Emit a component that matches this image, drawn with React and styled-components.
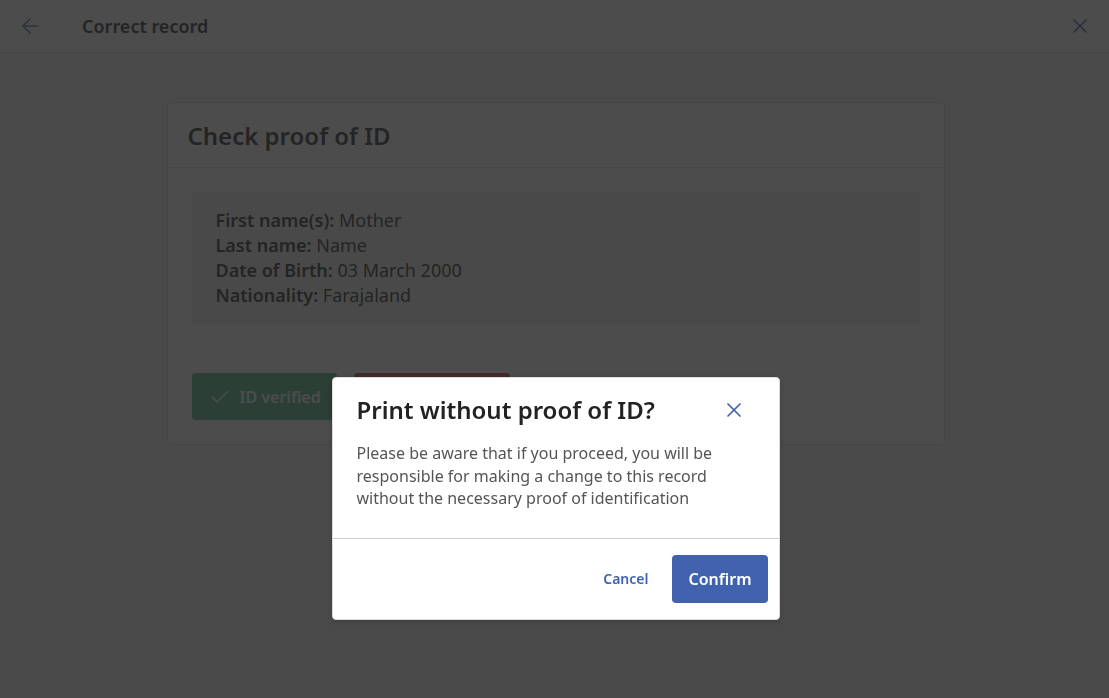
import React from "react";
import styled, { createGlobalStyle } from "styled-components";
import { ArrowLeft, X, Check } from "lucide-react";

const GlobalStyle = createGlobalStyle`
  html, body {
    margin: 0;
    padding: 0;
    height: 100%;
    background: #f5f5f5;
    font-family: "Noto Sans", "Open Sans", sans-serif;
    color: #222222;
  }
  #root {
    min-height: 100%;
  }
  * {
    box-sizing: border-box;
  }
`;

const Page = styled.div`
  min-height: 100vh;
  background: #f5f5f5;
`;

const Header = styled.header`
  height: 53px;
  display: flex;
  align-items: center;
  padding: 0 9px 0 10px;
  background: #ffffff;
  border-bottom: 1px solid #d7d7d7;
`;

const IconButton = styled.button`
  width: 40px;
  height: 40px;
  display: inline-flex;
  align-items: center;
  justify-content: center;
  padding: 0;
  border: 0;
  background: transparent;
  color: #4163af;
  cursor: pointer;
`;

const HeaderTitle = styled.h1`
  flex: 1;
  margin: 0 0 0 32px;
  font-size: 18px;
  font-weight: 600;
  color: #222222;
`;

const Content = styled.main`
  display: flex;
  justify-content: center;
  padding: 49px 0 0 2px;
`;

const Card = styled.section`
  width: 778px;
  background: #ffffff;
  border: 1px solid #d7d7d7;
  border-radius: 4px;
`;

const CardHeader = styled.div`
  height: 65px;
  display: flex;
  align-items: center;
  padding: 0 20px;
  border-bottom: 1px solid #d7d7d7;
`;

const CardTitle = styled.h2`
  margin: 0;
  font-size: 24px;
  font-weight: 600;
  color: #222222;
`;

const CardBody = styled.div`
  padding: 24px;
`;

const InfoBox = styled.div`
  background: #eeeeee;
  padding: 16px 24px;
`;

const InfoRow = styled.div`
  font-size: 18px;
  line-height: 25px;
  color: #222222;

  b {
    font-weight: 600;
  }
`;

const Actions = styled.div`
  display: flex;
  gap: 17px;
  margin-top: 49px;
`;

const StatusButton = styled.button`
  height: 47px;
  display: inline-flex;
  align-items: center;
  gap: 8px;
  padding: 0 16px;
  border: 0;
  border-radius: 4px;
  background: ${({ tone }) => (tone === "negative" ? "#d53f3f" : "#49b78d")};
  color: #ffffff;
  font-family: inherit;
  font-size: 16px;
  font-weight: 600;
  cursor: pointer;
`;

const Overlay = styled.div`
  position: fixed;
  inset: 0;
  background: rgba(36, 36, 36, 0.82);
  display: flex;
  justify-content: center;
  align-items: flex-start;
  padding-top: 377px;
  padding-left: 2px;
`;

const Modal = styled.div`
  width: 448px;
  background: #ffffff;
  border: 1px solid #dddddd;
  border-radius: 4px;
  box-shadow: 0 2px 6px rgba(0, 0, 0, 0.2);
`;

const ModalHeader = styled.div`
  display: flex;
  align-items: center;
  justify-content: space-between;
  padding: 16px 33px 0 24px;
`;

const ModalTitle = styled.h3`
  margin: 0;
  font-size: 24px;
  line-height: 32px;
  font-weight: 600;
  color: #222222;
`;

const CloseButton = styled.button`
  width: 24px;
  height: 24px;
  padding: 0;
  border: 0;
  display: inline-flex;
  align-items: center;
  justify-content: center;
  background: transparent;
  color: #4163af;
  cursor: pointer;
`;

const ModalBody = styled.p`
  margin: 0;
  padding: 16px 24px 28px 24px;
  font-size: 16px;
  line-height: 22.5px;
  color: #555555;
`;

const ModalFooter = styled.div`
  display: flex;
  justify-content: flex-end;
  align-items: center;
  gap: 12px;
  padding: 16px 11px 16px 24px;
  border-top: 1px solid #cccccc;
`;

const TextButton = styled.button`
  height: 48px;
  padding: 0 12px;
  border: 0;
  background: transparent;
  color: #4163af;
  font-family: inherit;
  font-size: 14px;
  font-weight: 600;
  cursor: pointer;
`;

const PrimaryButton = styled.button`
  height: 48px;
  padding: 0 16px;
  border: 0;
  border-radius: 4px;
  background: #4163af;
  color: #ffffff;
  font-family: inherit;
  font-size: 16px;
  font-weight: 600;
  cursor: pointer;
`;

const details = [
  ["First name(s):", "Mother"],
  ["Last name:", "Name"],
  ["Date of Birth:", "03 March 2000"],
  ["Nationality:", "Farajaland"],
];

export default function App() {
  return (
    <Page>
      <GlobalStyle />
      <Header>
        <IconButton aria-label="Back">
          <ArrowLeft size={24} strokeWidth={1.5} />
        </IconButton>
        <HeaderTitle>Correct record</HeaderTitle>
        <IconButton aria-label="Exit">
          <X size={24} strokeWidth={1.75} />
        </IconButton>
      </Header>

      <Content>
        <Card>
          <CardHeader>
            <CardTitle>Check proof of ID</CardTitle>
          </CardHeader>
          <CardBody>
            <InfoBox>
              {details.map(([label, value]) => (
                <InfoRow key={label}>
                  <b>{label}</b> {value}
                </InfoRow>
              ))}
            </InfoBox>
            <Actions>
              <StatusButton tone="positive">
                <Check size={24} strokeWidth={1.5} />
                ID verified
              </StatusButton>
              <StatusButton tone="negative">
                <X size={24} strokeWidth={1.5} />
                Not verified
              </StatusButton>
            </Actions>
          </CardBody>
        </Card>
      </Content>

      <Overlay>
        <Modal role="dialog">
          <ModalHeader>
            <ModalTitle>Print without proof of ID?</ModalTitle>
            <CloseButton aria-label="Close">
              <X size={24} strokeWidth={1.75} />
            </CloseButton>
          </ModalHeader>
          <ModalBody>
            Please be aware that if you proceed, you will be responsible for
            making a change to this record without the necessary proof of
            identification
          </ModalBody>
          <ModalFooter>
            <TextButton>Cancel</TextButton>
            <PrimaryButton>Confirm</PrimaryButton>
          </ModalFooter>
        </Modal>
      </Overlay>
    </Page>
  );
}
